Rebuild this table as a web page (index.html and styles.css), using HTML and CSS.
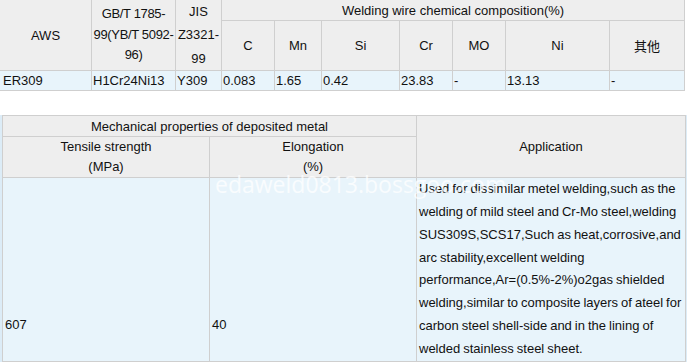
FILE: index.html
```html
<!DOCTYPE html>
<html>
<head>
<meta charset="utf-8">
<link rel="stylesheet" href="styles.css">
</head>
<body>
<table class="t1">
  <colgroup>
    <col class="w92"><col class="w84"><col class="w46"><col class="w53"><col class="w47"><col class="w78"><col class="w53"><col class="w53"><col class="w104"><col class="w75">
  </colgroup>
  <tr class="hd r1">
    <th rowspan="2">AWS</th>
    <th rowspan="2" class="gb">GB/T 1785-<br>99(YB/T 5092-<br>96)</th>
    <th rowspan="2" class="jis">JIS<br>Z3321-<br>99</th>
    <th colspan="7">Welding wire chemical composition(%)</th>
  </tr>
  <tr class="hd r2">
    <th>C</th><th>Mn</th><th>Si</th><th>Cr</th><th>MO</th><th>Ni</th><th>其他</th>
  </tr>
  <tr class="dt r3">
    <td>ER309</td><td>H1Cr24Ni13</td><td>Y309</td><td>0.083</td><td>1.65</td><td>0.42</td><td>23.83</td><td>-</td><td>13.13</td><td>-</td>
  </tr>
</table>

<div class="wrap">
  <table class="t2">
    <colgroup><col class="w207"><col class="w207"><col class="w269"></colgroup>
    <tr class="hd s1">
      <th colspan="2">Mechanical properties of deposited metal</th>
      <th rowspan="2">Application</th>
    </tr>
    <tr class="hd s2">
      <th>Tensile strength<br>(MPa)</th>
      <th>Elongation<br>(%)</th>
    </tr>
    <tr class="dt">
      <td class="num">607</td>
      <td class="num">40</td>
      <td class="app">Used for dissimilar metel welding,such as the<br>welding of mild steel and Cr-Mo steel,welding<br>SUS309S,SCS17,Such as heat,corrosive,and<br>arc stability,excellent welding<br>performance,Ar=(0.5%-2%)o2gas shielded<br>welding,similar to composite layers of ateel for<br>carbon steel shell-side and in the lining of<br>welded stainless steel sheet.</td>
    </tr>
  </table>
  <div class="mark">edaweld0813.bossgoo.com</div>
</div>
</body>
</html>
```

FILE: styles.css
```css
html, body {
  margin: 0;
  padding: 0;
  background: #ffffff;
}
body {
  font-family: "Liberation Sans", Arial, "Noto Sans CJK SC", sans-serif;
  font-size: 13px;
  color: #111;
}
table {
  border-collapse: collapse;
  table-layout: fixed;
}
th, td {
  border: 1px solid #cfcfcf;
  padding: 0 1px;
  font-weight: normal;
}
.hd th {
  background: #eeeeee;
  text-align: center;
  vertical-align: middle;
}
.dt td {
  background: #e8f4fb;
  text-align: left;
}
.t1 {
  width: 686px;
  margin: -1px 0 0 -1px;
}
.w92 { width: 92px; }
.w84 { width: 84px; }
.w46 { width: 46px; }
.w53 { width: 53px; }
.w47 { width: 47px; }
.w78 { width: 78px; }
.w104 { width: 104px; }
.w75 { width: 75px; }
.r1 { height: 21px; }
.r2 { height: 49px; }
.r3 { height: 20px; }
.r3 td { line-height: 18px; white-space: nowrap; overflow: hidden; }
.r3 td:first-child { padding-left: 3px; }
.gb {
  line-height: 20.5px;
  padding: 0;
  white-space: nowrap;
  letter-spacing: -0.35px;
  overflow: hidden;
}
.jis { line-height: 23.4px; padding: 0; white-space: nowrap; }

.wrap {
  position: relative;
  margin-top: 24px;
  width: 685px;
  padding-left: 2px;
  background: #dcecf7;
}
.t2 {
  width: 683px;
}
.w207 { width: 207px; }
.w269 { width: 269px; }
.s1 { height: 21px; }
.s2 { height: 41px; }
.s2 th { line-height: 20px; }
.num {
  vertical-align: bottom;
  padding: 0 2px 24px;
  line-height: 22.8px;
}
.app {
  line-height: 22.8px;
  padding: 0 0 0 2px;
  vertical-align: top;
  white-space: nowrap;
  overflow: hidden;
  word-spacing: -0.6px;
}
.mark {
  position: absolute;
  left: 215px;
  top: 53px;
  font-family: "Open Sans", sans-serif;
  font-size: 23px;
  color: rgba(255, 255, 255, 0.75);
  white-space: nowrap;
  pointer-events: none;
}
```
